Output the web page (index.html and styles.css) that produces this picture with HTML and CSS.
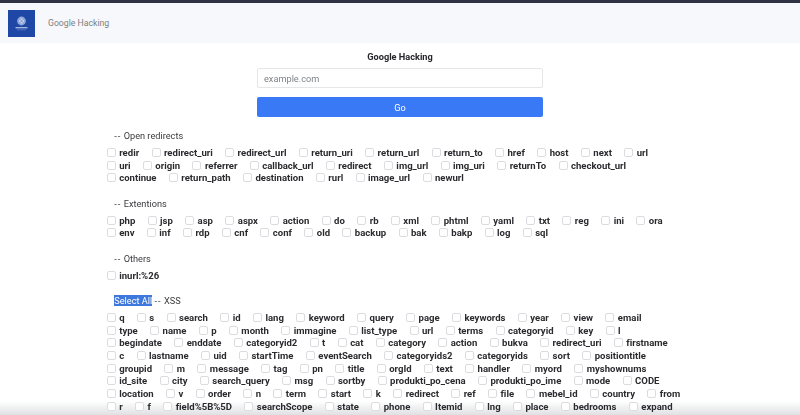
FILE: index.html
```html
<!DOCTYPE html>
<html lang="en">
<head>
<meta charset="utf-8">
<title>Google Hacking</title>
<link rel="stylesheet" href="styles.css">
</head>
<body>
<div class="topbar"></div>
<nav class="navbar">
  <div class="logo">
    <svg width="27" height="27" viewBox="0 0 27 27" aria-hidden="true">
      <rect width="27" height="27" fill="#1f48a6"/>
      <circle cx="13.5" cy="11" r="4.4" fill="#8fa6d8"/>
      <circle cx="13.5" cy="11" r="2.5" fill="#c9d5ee"/>
      <path d="M11.5 9l4 4M15.5 9l-4 4" stroke="#4f6fbd" stroke-width=".6"/>
      <rect x="7.5" y="17.2" width="12" height="1.1" fill="#c4d0ea"/>
      <rect x="9" y="19.6" width="9" height=".6" fill="#6f88c6"/>
    </svg>
  </div>
  <span class="brand">Google Hacking</span>
</nav>
<main class="main">
  <h1 class="title">Google Hacking</h1>
  <form class="search">
    <input class="domain" type="text" placeholder="example.com">
    <button class="go" type="button">Go</button>
  </form>
  <section class="group group-first">
    <p class="heading"><span class="dash">--</span> Open redirects</p>
    <div class="row"><label><i></i>redir</label><label><i></i>redirect_uri</label><label><i></i>redirect_url</label><label><i></i>return_uri</label><label><i></i>return_url</label><label><i></i>return_to</label><label><i></i>href</label><label><i></i>host</label><label><i></i>next</label><label><i></i>url</label></div>
    <div class="row"><label><i></i>uri</label><label><i></i>origin</label><label><i></i>referrer</label><label><i></i>callback_url</label><label><i></i>redirect</label><label><i></i>img_url</label><label><i></i>img_uri</label><label><i></i>returnTo</label><label><i></i>checkout_url</label></div>
    <div class="row"><label><i></i>continue</label><label><i></i>return_path</label><label><i></i>destination</label><label><i></i>rurl</label><label><i></i>image_url</label><label><i></i>newurl</label></div>
  </section>
  <section class="group">
    <p class="heading"><span class="dash">--</span> Extentions</p>
    <div class="row"><label><i></i>php</label><label><i></i>jsp</label><label><i></i>asp</label><label><i></i>aspx</label><label><i></i>action</label><label><i></i>do</label><label><i></i>rb</label><label><i></i>xml</label><label><i></i>phtml</label><label><i></i>yaml</label><label><i></i>txt</label><label><i></i>reg</label><label><i></i>ini</label><label><i></i>ora</label></div>
    <div class="row"><label><i></i>env</label><label><i></i>inf</label><label><i></i>rdp</label><label><i></i>cnf</label><label><i></i>conf</label><label><i></i>old</label><label><i></i>backup</label><label><i></i>bak</label><label><i></i>bakp</label><label><i></i>log</label><label><i></i>sql</label></div>
  </section>
  <section class="group">
    <p class="heading"><span class="dash">--</span> Others</p>
    <div class="row"><label><i></i>inurl:%26</label></div>
  </section>
  <section class="group">
    <p class="heading"><span class="selected">Select All</span> <span class="dash">--</span> XSS</p>
    <div class="row"><label><i></i>q</label><label><i></i>s</label><label><i></i>search</label><label><i></i>id</label><label><i></i>lang</label><label><i></i>keyword</label><label><i></i>query</label><label><i></i>page</label><label><i></i>keywords</label><label><i></i>year</label><label><i></i>view</label><label><i></i>email</label></div>
    <div class="row"><label><i></i>type</label><label><i></i>name</label><label><i></i>p</label><label><i></i>month</label><label><i></i>immagine</label><label><i></i>list_type</label><label><i></i>url</label><label><i></i>terms</label><label><i></i>categoryid</label><label><i></i>key</label><label><i></i>l</label></div>
    <div class="row"><label><i></i>begindate</label><label><i></i>enddate</label><label><i></i>categoryid2</label><label><i></i>t</label><label><i></i>cat</label><label><i></i>category</label><label><i></i>action</label><label><i></i>bukva</label><label><i></i>redirect_uri</label><label><i></i>firstname</label></div>
    <div class="row"><label><i></i>c</label><label><i></i>lastname</label><label><i></i>uid</label><label><i></i>startTime</label><label><i></i>eventSearch</label><label><i></i>categoryids2</label><label><i></i>categoryids</label><label><i></i>sort</label><label><i></i>positiontitle</label></div>
    <div class="row"><label><i></i>groupid</label><label><i></i>m</label><label><i></i>message</label><label><i></i>tag</label><label><i></i>pn</label><label><i></i>title</label><label><i></i>orgId</label><label><i></i>text</label><label><i></i>handler</label><label><i></i>myord</label><label><i></i>myshownums</label></div>
    <div class="row"><label><i></i>id_site</label><label><i></i>city</label><label><i></i>search_query</label><label><i></i>msg</label><label><i></i>sortby</label><label><i></i>produkti_po_cena</label><label><i></i>produkti_po_ime</label><label><i></i>mode</label><label><i></i>CODE</label></div>
    <div class="row"><label><i></i>location</label><label><i></i>v</label><label><i></i>order</label><label><i></i>n</label><label><i></i>term</label><label><i></i>start</label><label><i></i>k</label><label><i></i>redirect</label><label><i></i>ref</label><label><i></i>file</label><label><i></i>mebel_id</label><label><i></i>country</label><label><i></i>from</label></div>
    <div class="row"><label><i></i>r</label><label><i></i>f</label><label><i></i>field%5B%5D</label><label><i></i>searchScope</label><label><i></i>state</label><label><i></i>phone</label><label><i></i>Itemid</label><label><i></i>lng</label><label><i></i>place</label><label><i></i>bedrooms</label><label><i></i>expand</label></div>
  </section>
</main>
<div class="fade"></div>
</body>
</html>
```
FILE: styles.css
```css
html, body {
  margin: 0;
  height: 415px;
  overflow: hidden;
  background: #fff;
}
body {
  font-family: Roboto, "Liberation Sans", sans-serif;
  font-size: 9.2px;
  color: #2b2b2b;
  font-variant-ligatures: none;
}
.topbar {
  height: 3px;
  background: #2f3244;
}
.navbar {
  height: 40px;
  background: #f6f8fb;
  display: flex;
  align-items: center;
  padding-left: 8px;
  box-sizing: border-box;
}
.logo {
  width: 27px;
  height: 27px;
  line-height: 0;
}
.brand {
  margin-left: 13px;
  font-size: 8.7px;
  color: #7d7f83;
}
.main {
  position: relative;
  z-index: 1;
  padding: 9px 0 0 106.8px;
}
.title {
  margin: 0 0 0 -106.8px;
  height: 10px;
  line-height: 10px;
  font-size: 9.2px;
  font-weight: 700;
  text-align: center;
  color: #26262a;
}
.search {
  width: 286px;
  margin: 6px 0 0 150.2px;
  display: flex;
  flex-direction: column;
  gap: 9px;
}
.domain {
  box-sizing: border-box;
  height: 20px;
  width: 100%;
  padding: 0 6px;
  border: 1px solid #e4e6e8;
  border-radius: 2px;
  background: #fff;
  font: 9.2px Roboto, "Liberation Sans", sans-serif;
  outline: none;
}
.domain::placeholder {
  color: #7f8489;
  opacity: 1;
}
.go {
  height: 20px;
  border: 0;
  border-radius: 2px;
  background: #3a79f5;
  color: #fff;
  font: 9.2px Roboto, "Liberation Sans", sans-serif;
}
.group {
  margin-top: 13.5px;
}
.group-first {
  margin-top: 13px;
}
.heading {
  margin: 0 0 5.15px 7.5px;
  height: 11px;
  line-height: 11px;
  font-size: 9.2px;
  color: #3b3b3f;
}
.dash {
  letter-spacing: 1px;
}
.selected {
  background: #3f78dc;
  color: #fff;
}
.row {
  display: flex;
  gap: 12.4px;
  height: 12.7px;
  align-items: center;
}
.row label {
  display: flex;
  align-items: center;
  gap: 3.4px;
  font-weight: 700;
  font-size: 9.55px;
  color: #2b2b2f;
  white-space: nowrap;
}
.row i {
  display: block;
  box-sizing: border-box;
  width: 9px;
  height: 9px;
  border: 1px solid #dadcdf;
  border-radius: 2px;
  background: #fff;
}
.fade {
  position: fixed;
  left: 0;
  right: 0;
  bottom: 0;
  height: 14px;
  background: linear-gradient(to bottom, rgba(215,217,220,0), rgba(215,217,220,.8));
}
```
